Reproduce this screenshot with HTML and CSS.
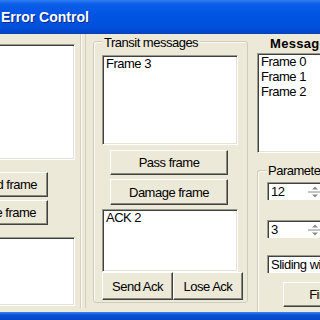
FILE: index.html
```html
<!DOCTYPE html>
<html>
<head>
<meta charset="utf-8">
<link rel="stylesheet" href="styles.css">
</head>
<body>
<div class="window">
  <div class="titlebar">Error Control</div>
  <div class="main">
    <div class="left">
      <div class="listbox lb-top"></div>
      <button class="btn lbtn first">Send frame</button>
      <button class="btn lbtn">Lose frame</button>
      <div class="listbox lb-bottom"></div>
    </div>
    <div class="sep"></div>
    <div class="group mid">
      <div class="legend">Transit messages</div>
      <div class="listbox transit">
        <div class="item">Frame 3</div>
      </div>
      <button class="btn wide pass">Pass frame</button>
      <button class="btn wide damage">Damage frame</button>
      <div class="listbox acks">
        <div class="item">ACK 2</div>
      </div>
      <div class="ackrow">
        <button class="btn send">Send Ack</button>
        <button class="btn lose">Lose Ack</button>
      </div>
    </div>
    <div class="right">
      <div class="label-bold">Messages</div>
      <div class="listbox received">
        <div class="item">Frame 0</div>
        <div class="item">Frame 1</div>
        <div class="item">Frame 2</div>
      </div>
      <div class="group params">
        <div class="legend">Parameters</div>
        <div class="edit e1">
          <span>12</span>
          <svg class="spin" width="14" height="14" viewBox="0 0 14 14"><path d="M4 4.5 L7 1.5 L10 4.5 Z" fill="#8a8a8a"/><path d="M0 7 H14" stroke="#8a8a8a" stroke-width="1"/><path d="M4 9.5 L7 12.5 L10 9.5 Z" fill="#8a8a8a"/></svg>
        </div>
        <div class="edit e2">
          <span>3</span>
          <svg class="spin" width="14" height="14" viewBox="0 0 14 14"><path d="M4 4.5 L7 1.5 L10 4.5 Z" fill="#8a8a8a"/><path d="M0 7 H14" stroke="#8a8a8a" stroke-width="1"/><path d="M4 9.5 L7 12.5 L10 9.5 Z" fill="#8a8a8a"/></svg>
        </div>
        <div class="edit combo"><span>Sliding window</span></div>
        <button class="btn finish">Finish</button>
      </div>
    </div>
  </div>
  <div class="taskbar"></div>
</div>
</body>
</html>
```
FILE: styles.css
```css
* { box-sizing: border-box; }
html, body {
  margin: 0;
  padding: 0;
  width: 320px;
  height: 320px;
  overflow: hidden;
  background: #ece9d8;
}
.window {
  width: 320px;
  height: 320px;
  overflow: hidden;
  display: flex;
  flex-direction: column;
  font-family: "Liberation Sans", Arial, sans-serif;
  font-size: 13px;
  letter-spacing: -0.5px;
  color: #000;
}
.titlebar {
  height: 34px;
  flex: none;
  line-height: 34px;
  padding-left: 1px;
  color: #fff;
  font-weight: bold;
  font-size: 14px;
  letter-spacing: 0;
  text-shadow: 1px 1px 0 #0a2a8a;
  background: linear-gradient(#2f7ff0 0%, #0a5ee8 12%, #0054e3 45%, #0050dc 80%, #0046c8 100%);
  border-bottom: 1px solid #0a3fb0;
}
.main {
  flex: none;
  height: 278px;
  display: flex;
  align-items: flex-start;
}
.main > * { flex: none; }
.listbox {
  background: #fff;
  border-top: 1px solid #9c9a8c;
  border-left: 1px solid #9c9a8c;
  border-right: 1px solid #fff;
  border-bottom: 1px solid #fff;
  box-shadow: inset 1px 1px 0 #404040, inset -1px -1px 0 #e4e2d6;
  padding: 0 2px 0 3px;
  line-height: 15px;
}
.item { white-space: nowrap; }
.btn {
  display: block;
  font-family: inherit;
  font-size: 13px;
  letter-spacing: -0.5px;
  color: #000;
  background: #ece9d8;
  border-top: 1px solid #fff;
  border-left: 1px solid #fff;
  border-right: 1px solid #404040;
  border-bottom: 1px solid #404040;
  box-shadow: inset -1px -1px 0 #8c8a7c;
  padding: 0;
  margin: 0;
  text-align: center;
  white-space: nowrap;
}
/* left column */
.left {
  margin-left: -40px;
  width: 121px;
  height: 274px;
  padding-top: 10px;
  border-right: 1px solid #d2cfbf;
  box-shadow: 1px 0 0 #fbfaf4;
}
.lb-top { width: 115px; height: 116px; }
.lbtn { width: 84px; height: 25px; margin-left: 4px; margin-top: 3px; }
.lbtn.first { margin-top: 12px; }
.lb-bottom { width: 115px; height: 69px; margin-top: 12px; }
.sep {
  width: 5px;
  height: 274px;
  border-right: 1px solid #d2cfbf;
}
/* group boxes */
.group {
  border: 1px solid #cfccbb;
  border-radius: 3px;
  box-shadow: inset 1px 1px 0 #fbfaf4;
}
.legend {
  width: fit-content;
  background: #ece9d8;
  line-height: 14px;
  padding: 0 2px;
}
.mid {
  margin-left: 7px;
  margin-top: 7px;
  width: 155px;
  height: 262px;
  padding-left: 8px;
}
.mid .legend { margin-top: -6px; margin-left: 0; }
.transit { width: 136px; height: 90px; margin-top: 5px; }
.wide { width: 118px; height: 25px; margin-left: 8px; }
.pass { margin-top: 5px; }
.damage { margin-top: 4px; height: 26px; }
.acks { width: 136px; height: 63px; margin-top: 4px; }
.ackrow { display: flex; height: 28px; }
.send { width: 71px; height: 28px; }
.lose { width: 70px; height: 28px; }
/* right column */
.right {
  margin-left: 9px;
  padding-top: 3px;
  width: 80px;
}
.label-bold {
  font-weight: bold;
  letter-spacing: 0.3px;
  line-height: 14px;
  padding-left: 13px;
  white-space: nowrap;
}
.received { width: 75px; height: 100px; margin-top: 2px; }
.params {
  margin-top: 17px;
  width: 80px;
  height: 150px;
  border-right: none;
  padding-left: 9px;
}
.params .legend { margin-top: -7px; margin-left: 0; padding: 0 1px; }
.edit {
  display: flex;
  align-items: center;
  width: 75px;
  height: 18px;
  background: #fff;
  border-top: 1px solid #9c9a8c;
  border-left: 1px solid #9c9a8c;
  box-shadow: inset 1px 1px 0 #404040;
  padding-left: 3px;
  line-height: 15px;
  white-space: nowrap;
}
.edit span { flex: none; width: 36px; overflow: visible; }
.spin { margin-left: 1px; flex: none; }
.e1 { margin-top: 4px; }
.e2 { margin-top: 20px; }
.combo { margin-top: 17px; }
.finish { width: 84px; height: 25px; margin-top: 9px; margin-left: 16px; }
.taskbar {
  flex: none;
  height: 8px;
  background: linear-gradient(#3a86f0, #0a50d6 40%, #0848c8);
}
```
